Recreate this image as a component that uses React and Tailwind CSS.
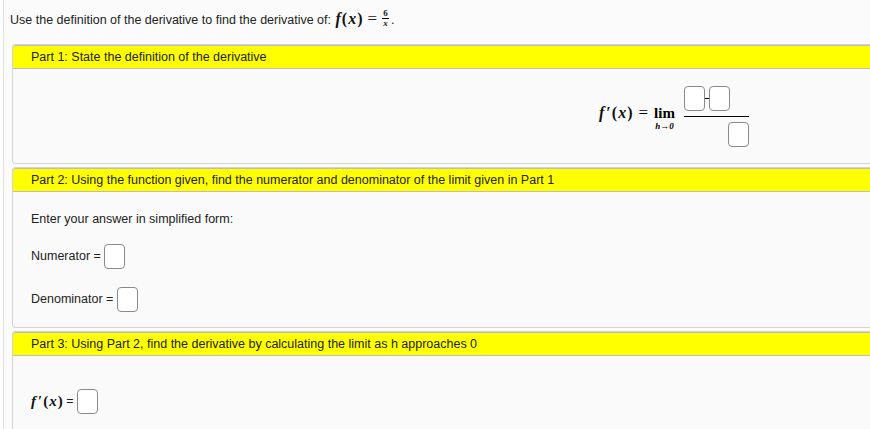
import React from 'react'

const sans = { fontFamily: '"Liberation Sans", Arial, sans-serif' }
const serif = { fontFamily: '"Liberation Serif", "Times New Roman", serif' }

function Box() {
  return <span className="inline-block w-[21px] h-[25px] bg-white border border-[#8a8a8a] rounded-[4px]" />
}

// f'(x) written in a math-like serif
function FPrime({ size = 'text-[16px]' }) {
  return (
    <span className={`${size} font-semibold text-[#111] flex items-baseline`} style={serif}>
      <span className="italic">f</span>
      <span className="ml-[2px] mr-[1px]">&#8242;</span>
      <span>(</span>
      <span className="italic mx-[1px]">x</span>
      <span>)</span>
    </span>
  )
}

function Panel({ title, children, bodyClass }) {
  return (
    <div className="w-[880px] ml-[8px] mb-[3px] border border-[#d4d4d4] rounded-[3px] bg-[#fafafa]">
      <div className="h-[24px] bg-[#ffff00] border-t border-t-[#bdbdbd] border-b border-b-[#bdbdbd] rounded-t-[3px] pl-[18px] flex items-center text-[12.5px] text-[#222]">
        {title}
      </div>
      <div className={bodyClass}>{children}</div>
    </div>
  )
}

export default function App() {
  return (
    <div className="w-full h-[429px] overflow-hidden bg-white" style={sans}>
      <div className="ml-[3px] h-full border-l border-[#e2e2e2] bg-[#fbfbfb]">
        <div className="h-[44px] pl-[6px] pt-[11px] text-[12.5px] text-[#222] flex items-start">
          <span>Use the definition of the derivative to find the derivative of:&nbsp;</span>
          <span className="text-[16px] leading-[16px] font-semibold text-[#111] flex items-baseline" style={serif}>
            <span className="italic ml-[1px]">f</span>
            <span className="ml-[1px]">(</span>
            <span className="italic mx-[1px]">x</span>
            <span>)</span>
          </span>
          <span className="text-[17px] leading-[16px] mx-[5px]" style={serif}>=</span>
          <span className="flex flex-col items-center mt-[-2px] text-[9px] leading-[9px] font-bold" style={serif}>
            <span>6</span>
            <span className="w-[7px] border-t border-black"></span>
            <span className="italic">x</span>
          </span>
          <span className="ml-[2px] text-[13px] leading-[18px]">.</span>
        </div>

        <Panel title="Part 1: State the definition of the derivative" bodyClass="h-[94px] flex items-center pl-[586px]">
          <div className="flex items-center">
            <span className="mb-[6px]"><FPrime /></span>
            <span className="text-[17px] mx-[6px] mb-[6px]" style={serif}>=</span>
            <span className="flex flex-col items-center mt-[6px]" style={serif}>
              <span className="text-[15px] leading-[15px] font-semibold">lim</span>
              <span className="text-[9px] leading-[11px] italic font-semibold">h&#8594;0</span>
            </span>
            <div className="flex flex-col ml-[9px] w-[65px]">
              <div className="flex items-center">
                <Box />
                <span className="w-[4px] border-t border-black"></span>
                <Box />
              </div>
              <div className="border-t-[1.5px] border-black my-[5px]"></div>
              <div className="flex justify-end">
                <Box />
              </div>
            </div>
          </div>
        </Panel>

        <Panel title="Part 2: Using the function given, find the numerator and denominator of the limit given in Part 1" bodyClass="h-[135px] pl-[18px] text-[12.5px] text-[#222]">
          <div className="pt-[18px]">Enter your answer in simplified form:</div>
          <div className="flex items-center mt-[15px]">
            <span>Numerator =&nbsp;</span>
            <Box />
          </div>
          <div className="flex items-center mt-[18px]">
            <span>Denominator =&nbsp;</span>
            <Box />
          </div>
        </Panel>

        <Panel title="Part 3: Using Part 2, find the derivative by calculating the limit as h approaches 0" bodyClass="h-[80px] pl-[18px] text-[12.5px] text-[#222]">
          <div className="flex items-center pt-[33px]">
            <FPrime size="text-[15px]" />
            <span>&nbsp;=&nbsp;</span>
            <Box />
          </div>
        </Panel>
      </div>
    </div>
  )
}
